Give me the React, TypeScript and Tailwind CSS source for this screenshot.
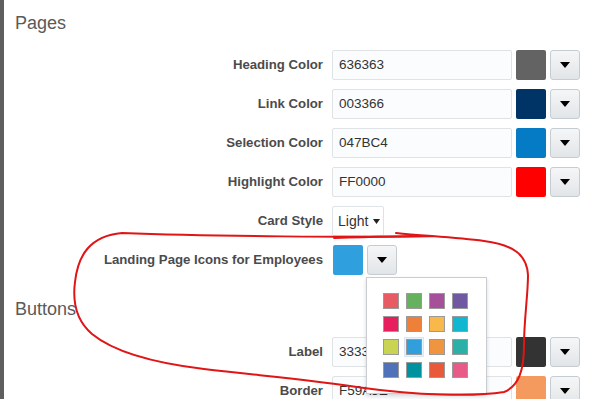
import * as React from "react"

const font = { fontFamily: '"Liberation Sans", Arial, sans-serif' }

const iconColors = [
  "#E85B65", "#65B15E", "#A6509C", "#7158A3",
  "#E81F5F", "#EF803A", "#F8B94A", "#11B6D0",
  "#C8D452", "#309FDC", "#F0953F", "#2AB0A7",
  "#4F72B8", "#00939F", "#E95A3A", "#E85A87",
]

function Caret() {
  return (
    <svg width="10" height="6" viewBox="0 0 10 6">
      <polygon points="0,0 10,0 5,6" fill="#000" />
    </svg>
  )
}

function DropButton({ children }: { children?: React.ReactNode }) {
  return (
    <div className="relative">
      <button className="flex h-[30px] w-[30px] items-center justify-center rounded-[3px] border border-[#c5ccd2] bg-gradient-to-b from-[#f5f6f7] to-[#e2e5e8]">
        <Caret />
      </button>
      {children}
    </div>
  )
}

function Label({ text }: { text: string }) {
  return (
    <div className="w-[308px] text-right text-[13.2px] font-bold text-[#4b4b4b]">{text}</div>
  )
}

function ColorRow({ label, value, color }: { label: string; value: string; color: string }) {
  return (
    <div className="flex h-[30px] items-center">
      <Label text={label} />
      <div className="ml-[9px] flex h-[30px] w-[180px] items-center rounded-[2px] border border-[#dfe3e6] bg-[#fbfcfd] pl-[6px] text-[13.5px] text-[#333]">
        {value}
      </div>
      <div className="ml-[4px] h-[30px] w-[30px] rounded-[2px]" style={{ backgroundColor: color }} />
      <div className="ml-[4px]">
        <DropButton />
      </div>
    </div>
  )
}

function IconPalette() {
  return (
    <div className="absolute left-[-1px] top-[32px] z-10 w-[121px] border border-[#c9cdd1] bg-white pb-[15px] pl-[16px] pt-[15px] shadow-[0_2px_4px_rgba(0,0,0,0.15)]">
      <div className="grid w-[85px] grid-cols-4 gap-[7px]">
        {iconColors.map((c, i) => (
          <div key={i} className="relative h-[16px] w-[16px]">
            {i === 9 && (
              <div className="absolute -inset-[2px] border border-[#d6e8f8] bg-[#e6f2fc]" />
            )}
            <div className="relative h-[16px] w-[16px] border border-[#9a9a9a]" style={{ backgroundColor: c }} />
          </div>
        ))}
      </div>
    </div>
  )
}

export default function App() {
  return (
    <div className="relative h-screen w-full overflow-hidden border-l-4 border-[#5f5f5f] bg-white pl-[11px]" style={font}>
      <div className="mt-[11px] text-[18px] leading-[24px] text-[#5a5a5a]">Pages</div>

      <div className="mt-[15px] flex flex-col gap-[9px]">
        <ColorRow label="Heading Color" value="636363" color="#636363" />
        <ColorRow label="Link Color" value="003366" color="#003366" />
        <ColorRow label="Selection Color" value="047BC4" color="#047BC4" />
        <ColorRow label="Highlight Color" value="FF0000" color="#FF0000" />

        <div className="flex h-[30px] items-center">
          <Label text="Card Style" />
          <div className="ml-[9px] flex h-[30px] w-[52px] items-center gap-[5px] rounded-[2px] border border-[#dfe3e6] bg-white pl-[5px] text-[14px] text-[#333]">
            Light
            <svg width="7" height="5" viewBox="0 0 7 5">
              <polygon points="0,0 7,0 3.5,5" fill="#222" />
            </svg>
          </div>
        </div>

        <div className="flex h-[30px] items-center">
          <Label text="Landing Page Icons for Employees" />
          <div className="ml-[10px] h-[30px] w-[30px] rounded-[2px] bg-[#2f9fdd]" />
          <div className="ml-[4px]">
            <DropButton>
              <IconPalette />
            </DropButton>
          </div>
        </div>
      </div>

      <div className="mt-[22px] text-[18px] leading-[24px] text-[#5a5a5a]">Buttons</div>

      <div className="mt-[16px] flex flex-col gap-[9px]">
        <ColorRow label="Label" value="333333" color="#333333" />
        <ColorRow label="Border" value="F59A5E" color="#F59A5E" />
      </div>

      <svg className="pointer-events-none absolute left-0 top-0 z-20" width="606" height="399" viewBox="0 0 606 399" fill="none">
        <path
          d="M 428 236 C 360 238, 200 236, 118 233 C 86 236, 74 255, 71 282 C 68 305, 74 322, 88 334 C 110 352, 150 363, 200 369 C 260 376, 310 380, 360 388 C 410 395, 470 397, 500 392 C 515 386, 520 370, 520 345 C 520 320, 524 295, 524 275 C 523 255, 510 245, 480 241 C 450 237, 420 236, 392 233"
          stroke="#e01515"
          strokeWidth="2"
          strokeLinecap="round"
        />
        <path d="M 330 238 C 360 237, 400 236, 428 236" stroke="#e01515" strokeWidth="1.8" strokeLinecap="round" />
      </svg>
    </div>
  )
}
